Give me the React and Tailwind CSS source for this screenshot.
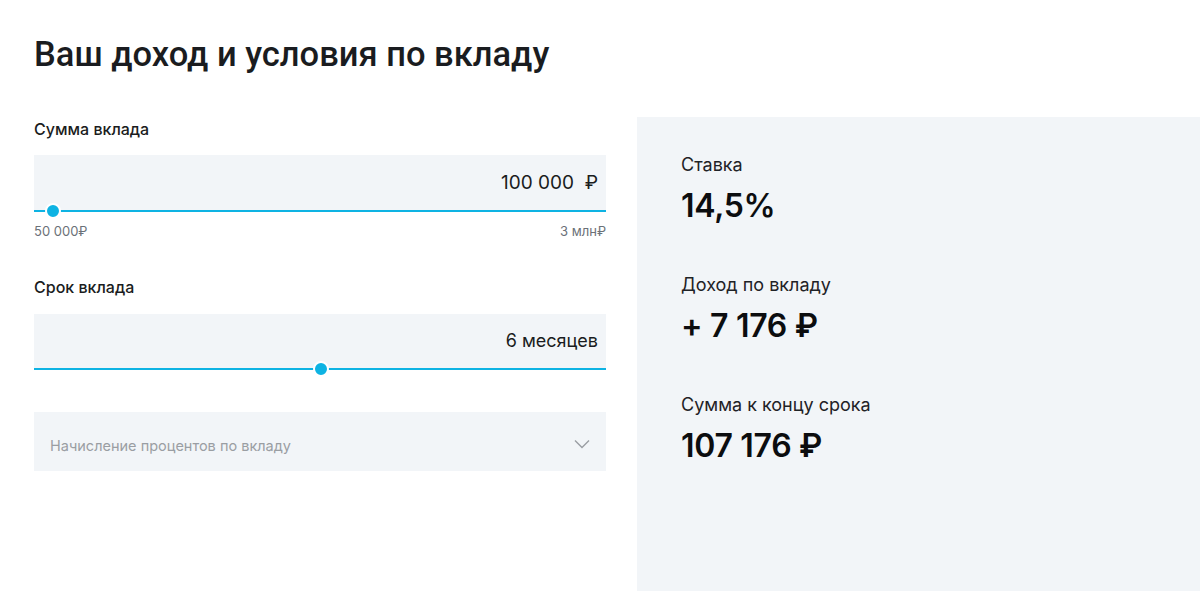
import React from "react";

const sans = { fontFamily: "Inter, 'Noto Sans', sans-serif" };

function Slider({ pos }) {
  return (
    <div className="relative h-[2px] bg-[#0eb3e3]">
      <div
        className="absolute top-1/2 h-[16px] w-[16px] -translate-x-1/2 -translate-y-1/2 rounded-full border-2 border-white bg-[#0eb3e3]"
        style={{ left: pos }}
      />
    </div>
  );
}

function Stat({ label, value }) {
  return (
    <div className="flex flex-col">
      <div className="text-[18px] leading-[24px] text-[#1f2226]">{label}</div>
      <div className="mt-[9px] text-[32px] font-semibold leading-[40px] tracking-[-0.3px] text-[#0c0d0f]">{value}</div>
    </div>
  );
}

export default function App() {
  return (
    <div className="h-[591px] w-[1200px] overflow-hidden bg-white" style={sans}>
      <div className="pl-[34px] pt-[34px]">
        <h1
          className="text-[34.5px] font-medium leading-[40px] text-[#1a1c20]"
          style={{ fontFamily: "Roboto, 'Noto Sans', sans-serif" }}
        >
          Ваш доход и условия по вкладу
        </h1>
      </div>
      <div className="mt-[43px] flex">
        <div className="ml-[34px] w-[572px] pt-[2px]">
          <div className="text-[16px] font-medium leading-[20px] text-[#1a1c20]">Сумма вклада</div>
          <div className="mt-[16px] flex h-[55px] items-start justify-end bg-[#f2f5f8] pr-[8px] pt-[17px]">
            <span className="text-[19px] leading-[22px] text-[#1a1c20]">100 000&nbsp;&nbsp;₽</span>
          </div>
          <Slider pos="19px" />
          <div className="mt-[11px] flex justify-between text-[13px] leading-[16px] text-[#6b7178]">
            <span>50 000₽</span>
            <span>3 млн₽</span>
          </div>
          <div className="mt-[38px] text-[16px] font-medium leading-[20px] text-[#1a1c20]">Срок вклада</div>
          <div className="mt-[17px] flex h-[54px] items-start justify-end bg-[#f2f5f8] pr-[8px] pt-[16px]">
            <span className="text-[18px] leading-[22px] text-[#1a1c20]">6 месяцев</span>
          </div>
          <Slider pos="287px" />
          <div className="mt-[42px] flex h-[59px] items-center justify-between bg-[#f2f5f8] pl-[16px] pr-[16px]">
            <span className="mt-[8px] text-[14.5px] leading-[20px] text-[#9a9ea3]">Начисление процентов по вкладу</span>
            <svg className="mt-[4px]" width="16" height="10" viewBox="0 0 16 10" fill="none">
              <path d="M1 1.5 L8 8.5 L15 1.5" stroke="#9a9ea3" strokeWidth="1.4" />
            </svg>
          </div>
        </div>
        <div className="ml-[31px] h-[474px] flex-1 bg-[#f2f5f8] pl-[44px] pt-[36px]">
          <div className="flex flex-col gap-[47px]">
            <Stat label="Ставка" value="14,5%" />
            <Stat label="Доход по вкладу" value="+ 7 176 ₽" />
            <Stat label="Сумма к концу срока" value="107 176 ₽" />
          </div>
        </div>
      </div>
    </div>
  );
}
